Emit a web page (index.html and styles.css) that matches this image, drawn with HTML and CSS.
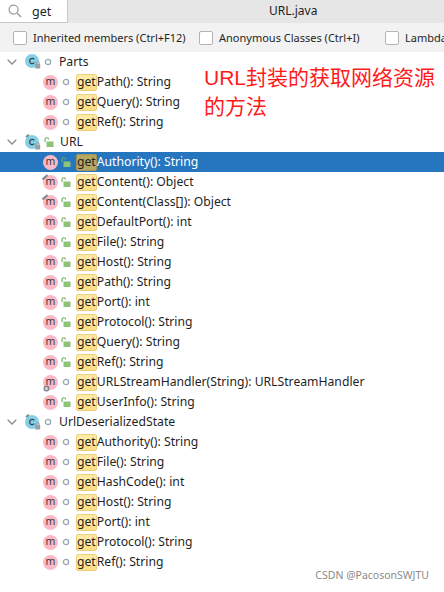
FILE: index.html
```html
<!DOCTYPE html>
<html lang="zh">
<head>
<meta charset="utf-8">
<title>URL.java</title>
<link rel="stylesheet" href="styles.css">
</head>
<body>
<svg class="defs" width="0" height="0" aria-hidden="true">
  <defs>
    <symbol id="chev" viewBox="0 0 10 6"><path d="M.7.7 5 5 9.3.7" fill="none" stroke="#8c8c8c" stroke-width="1.3"/></symbol>
    <symbol id="dot" viewBox="0 0 8 8"><circle cx="4" cy="4" r="2.6" fill="none" stroke="#9aa7b0" stroke-width="1.3"/></symbol>
    <symbol id="lock" viewBox="0 0 10 10"><rect x="2.5" y="4.5" width="7" height="5.5" fill="#8cc27a"/><path d="M1 5V2.6C1 1.5 1.8.8 2.8.8s1.8.7 1.8 1.8" fill="none" stroke="#6fae5c" stroke-width="1.1"/></symbol>
    <symbol id="cls" viewBox="0 0 16 16"><circle cx="7" cy="7" r="7" fill="#84cfe8"/><path d="M9.3 5.4A2.6 2.6 0 1 0 9.3 8.6" fill="none" stroke="#3a4a52" stroke-width="1.3"/><rect x="10.2" y="10" width="5" height="4.5" fill="#9aa0a6"/><path d="M11.2 10V9a1.5 1.5 0 0 1 3 0v1" fill="none" stroke="#9aa0a6"/></symbol>
    <symbol id="clsp" viewBox="0 0 16 16"><circle cx="7" cy="8" r="7" fill="#84cfe8"/><path d="M9.3 6.4A2.6 2.6 0 1 0 9.3 9.6" fill="none" stroke="#3a4a52" stroke-width="1.3"/><path d="M1 3 4 .8" stroke="#7d8790" stroke-width="2"/><rect x="10.2" y="11" width="5" height="4.5" fill="#9aa0a6"/><path d="M11.2 11v-1a1.5 1.5 0 0 1 3 0v1" fill="none" stroke="#9aa0a6"/></symbol>
    <symbol id="pin" viewBox="0 0 6 6"><path d="M.5 5.5 5.5 1" stroke="#7d8790" stroke-width="2"/></symbol>
    <symbol id="gear" viewBox="0 0 7 7"><circle cx="3.5" cy="3.5" r="2.2" fill="none" stroke="#7d8790" stroke-width="1.6"/></symbol>
  </defs>
</svg>
<main class="app">
  <header class="tabs">
    <div class="search">
      <svg class="search-icon" viewBox="0 0 14 14"><circle cx="5.6" cy="5.6" r="4.5" fill="none" stroke="#9a9a9a" stroke-width="1.2"/><path d="M9 9l4 4" stroke="#9a9a9a" stroke-width="1.4"/></svg>
      <span>get</span>
    </div>
    <div class="title">URL.java</div>
  </header>
  <div class="filters">
    <label class="filter f1"><i class="box"></i><span>Inherited members (Ctrl+F12)</span></label>
    <label class="filter f2"><i class="box"></i><span>Anonymous Classes (Ctrl+I)</span></label>
    <label class="filter"><i class="box"></i><span>Lambdas</span></label>
  </div>
  <div class="tree">
    <div class="row cls"><svg class="chev"><use href="#chev"/></svg><svg class="cicon"><use href="#cls"/></svg><svg class="vis"><use href="#dot"/></svg><span>Parts</span></div>
    <div class="row"><i class="m">m</i><svg class="vis"><use href="#dot"/></svg><span><b>get</b>Path(): String</span></div>
    <div class="row"><i class="m">m</i><svg class="vis"><use href="#dot"/></svg><span><b>get</b>Query(): String</span></div>
    <div class="row"><i class="m">m</i><svg class="vis"><use href="#dot"/></svg><span><b>get</b>Ref(): String</span></div>
    <div class="row cls"><svg class="chev"><use href="#chev"/></svg><svg class="cicon"><use href="#clsp"/></svg><svg class="vis lk"><use href="#lock"/></svg><span>URL</span></div>
    <div class="row sel"><i class="m">m</i><svg class="vis lk"><use href="#lock"/></svg><span><b>get</b>Authority(): String</span></div>
    <div class="row"><i class="m pinned">m<svg class="mark"><use href="#pin"/></svg></i><svg class="vis lk"><use href="#lock"/></svg><span><b>get</b>Content(): Object</span></div>
    <div class="row"><i class="m pinned">m<svg class="mark"><use href="#pin"/></svg></i><svg class="vis lk"><use href="#lock"/></svg><span><b>get</b>Content(Class[]): Object</span></div>
    <div class="row"><i class="m">m</i><svg class="vis lk"><use href="#lock"/></svg><span><b>get</b>DefaultPort(): int</span></div>
    <div class="row"><i class="m">m</i><svg class="vis lk"><use href="#lock"/></svg><span><b>get</b>File(): String</span></div>
    <div class="row"><i class="m">m</i><svg class="vis lk"><use href="#lock"/></svg><span><b>get</b>Host(): String</span></div>
    <div class="row"><i class="m">m</i><svg class="vis lk"><use href="#lock"/></svg><span><b>get</b>Path(): String</span></div>
    <div class="row"><i class="m">m</i><svg class="vis lk"><use href="#lock"/></svg><span><b>get</b>Port(): int</span></div>
    <div class="row"><i class="m">m</i><svg class="vis lk"><use href="#lock"/></svg><span><b>get</b>Protocol(): String</span></div>
    <div class="row"><i class="m">m</i><svg class="vis lk"><use href="#lock"/></svg><span><b>get</b>Query(): String</span></div>
    <div class="row"><i class="m">m</i><svg class="vis lk"><use href="#lock"/></svg><span><b>get</b>Ref(): String</span></div>
    <div class="row"><i class="m">m<svg class="mark gear"><use href="#gear"/></svg></i><svg class="vis"><use href="#dot"/></svg><span><b>get</b>URLStreamHandler(String): URLStreamHandler</span></div>
    <div class="row"><i class="m">m</i><svg class="vis lk"><use href="#lock"/></svg><span><b>get</b>UserInfo(): String</span></div>
    <div class="row cls"><svg class="chev"><use href="#chev"/></svg><svg class="cicon"><use href="#clsp"/></svg><svg class="vis"><use href="#dot"/></svg><span>UrlDeserializedState</span></div>
    <div class="row"><i class="m">m</i><svg class="vis"><use href="#dot"/></svg><span><b>get</b>Authority(): String</span></div>
    <div class="row"><i class="m">m</i><svg class="vis"><use href="#dot"/></svg><span><b>get</b>File(): String</span></div>
    <div class="row"><i class="m">m</i><svg class="vis"><use href="#dot"/></svg><span><b>get</b>HashCode(): int</span></div>
    <div class="row"><i class="m">m</i><svg class="vis"><use href="#dot"/></svg><span><b>get</b>Host(): String</span></div>
    <div class="row"><i class="m">m</i><svg class="vis"><use href="#dot"/></svg><span><b>get</b>Port(): int</span></div>
    <div class="row"><i class="m">m</i><svg class="vis"><use href="#dot"/></svg><span><b>get</b>Protocol(): String</span></div>
    <div class="row"><i class="m">m</i><svg class="vis"><use href="#dot"/></svg><span><b>get</b>Ref(): String</span></div>
  </div>
  <p class="note">URL封装的获取网络资源的方法</p>
  <div class="mark-text">CSDN @PacosonSWJTU</div>
</main>
</body>
</html>
```
FILE: styles.css
```css
* { box-sizing: border-box; }
html, body { margin: 0; padding: 0; }
body { width: 444px; height: 592px; overflow: hidden; background: #fff; color: #1f1f1f; font-family: "Noto Sans", "Open Sans", sans-serif; font-size: 12.2px; }
.defs { position: absolute; }
.app { position: relative; width: 444px; height: 592px; overflow: hidden; }

.tabs { display: flex; height: 23px; background: #e6e6e6; }
.search { display: flex; align-items: center; width: 68px; padding-left: 8px; gap: 10px; background: #fff; border-right: 1px solid #c8c8c8; border-bottom: 1px solid #c8c8c8; font-size: 12.5px; }
.search-icon { width: 14px; height: 14px; }
.title { flex: 1; padding-left: 201px; padding-top: 2px; line-height: 17px; font-size: 12px; }

.filters { display: flex; align-items: center; height: 29px; padding-left: 13px; background: #f2f2f2; white-space: nowrap; overflow: hidden; font-size: 11px; }
.filter { display: flex; align-items: center; gap: 6px; flex: none; }
.f1, .f2 { width: 186px; }
.box { width: 14px; height: 14px; background: #fff; border: 1px solid #b4b4b4; border-radius: 2px; }

.tree { display: flex; flex-direction: column; }
.row { display: flex; align-items: center; height: 20px; padding-left: 43px; padding-bottom: 1px; white-space: nowrap; }
.row.cls { padding-left: 7px; }
.chev { width: 10px; height: 6px; margin-right: 8px; }
.cicon { width: 16px; height: 16px; margin-right: 3px; }
.m { position: relative; display: block; flex: none; width: 15px; height: 15px; margin-top: 1px; border-radius: 50%; background: #fbb9c6; color: #3a3a3a; font-style: normal; font-size: 10.5px; line-height: 13px; text-align: center; }
.mark { position: absolute; left: -1px; top: -1px; width: 6px; height: 6px; }
.mark.gear { width: 7px; height: 7px; top: auto; bottom: -2px; left: 0; }
.vis { flex: none; width: 8px; height: 8px; margin-left: 4px; margin-right: 6px; }
.vis.lk { width: 10px; height: 10px; margin-left: 3px; margin-right: 5px; }
.cls .vis { margin-left: 0; margin-right: 7px; }
.cls .vis.lk { margin-right: 6px; }
.row b { display: inline-block; font-weight: 400; background: #ffeaa8; border: 1px solid #ebcf7d; border-radius: 2px; margin: -1px 0; padding: 0 0 1px; line-height: 14px; box-shadow: inset 0 -5px 0 #ffdf85; }
.sel { background: #2675bf; color: #fff; }
.sel b { background: #b5a862; border-color: #a09555; box-shadow: none; color: #222; }

.note { position: absolute; left: 204px; top: 63px; width: 238px; margin: 0; color: #ff1a1a; font-family: "Liberation Sans", "Noto Sans CJK SC", sans-serif; font-size: 21px; line-height: 29px; }
.mark-text { position: absolute; right: 15px; bottom: 10px; color: #8a8a8a; font-size: 10.5px; line-height: 14px; }
```
